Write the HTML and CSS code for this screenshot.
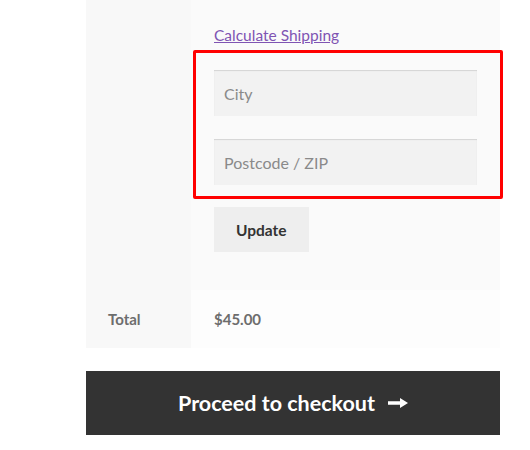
FILE: index.html
```html
<!DOCTYPE html>
<html lang="en">
<head>
  <meta charset="UTF-8">
  <title>Cart totals</title>
  <link rel="stylesheet" href="styles.css">
</head>
<body>

<div class="cart-totals">
  <table class="totals-table">
    <tr class="shipping">
      <th></th>
      <td>
        <p class="calc-link"><a href="#">Calculate Shipping</a></p>
        <div class="highlight">
          <input class="field" type="text" placeholder="City">
          <input class="field" type="text" placeholder="Postcode / ZIP">
        </div>
        <button class="update-btn">Update</button>
      </td>
    </tr>
    <tr class="order-total">
      <th>Total</th>
      <td><strong>$45.00</strong></td>
    </tr>
  </table>

  <a class="checkout-btn" href="#">Proceed to checkout
    <svg class="arrow" width="20" height="10" viewBox="0 0 20 10"><path d="M0 3.3h12V0l8 5-8 5V6.7H0z" fill="#fff"/></svg>
  </a>
</div>

</body>
</html>
```

FILE: styles.css
```css
body {
  margin: 0;
  background: #fff;
  font-family: Lato, "Liberation Sans", sans-serif;
  font-size: 16px;
  color: #6d6d6d;
}

.cart-totals {
  margin-left: 86px;
  width: 414px;
}

.totals-table {
  width: 100%;
  border-collapse: collapse;
}

.totals-table th {
  width: 105px;
  box-sizing: border-box;
  background: #f8f8f8;
  text-align: left;
  padding: 16px 0 16px 22px;
  font-size: 15px;
  font-weight: 700;
  line-height: 26px;
}

.totals-table td {
  padding: 16px 23px;
  background: #fdfdfd;
  line-height: 26px;
  font-size: 15px;
}

.totals-table td strong {
  font-weight: 700;
  color: #6d6d6d;
}

.shipping td {
  background: #fafafa;
  padding: 22px 23px 38px;
  vertical-align: top;
}

.calc-link {
  margin: 0;
  font-size: 15.5px;
}

.calc-link a {
  color: #7f54b3;
}

.highlight {
  margin: 2px -26px 0 -21px;
  padding: 17px 23px 11px 18px;
  border: 3px solid #ff0000;
  border-radius: 2px;
}

.field {
  display: block;
  width: 100%;
  box-sizing: border-box;
  height: 46px;
  padding: 0 10px;
  border: 0;
  background: #f2f2f2;
  box-shadow: inset 0 1px 1px rgba(0, 0, 0, 0.125);
  font-family: inherit;
  font-size: 16px;
  color: #43454b;
  outline: none;
}

.field::placeholder {
  color: #8a8a8a;
}

.field + .field {
  margin-top: 23px;
}

.update-btn {
  display: block;
  margin-top: 8px;
  height: 45px;
  padding: 0 22px;
  border: 0;
  background: #eeeeee;
  color: #333;
  font-family: inherit;
  font-size: 15.5px;
  font-weight: 700;
}

.checkout-btn {
  display: flex;
  align-items: center;
  justify-content: center;
  gap: 13px;
  margin-top: 23px;
  height: 64px;
  background: #333333;
  color: #fff;
  text-decoration: none;
  font-size: 21.5px;
  font-weight: 700;
}
```
